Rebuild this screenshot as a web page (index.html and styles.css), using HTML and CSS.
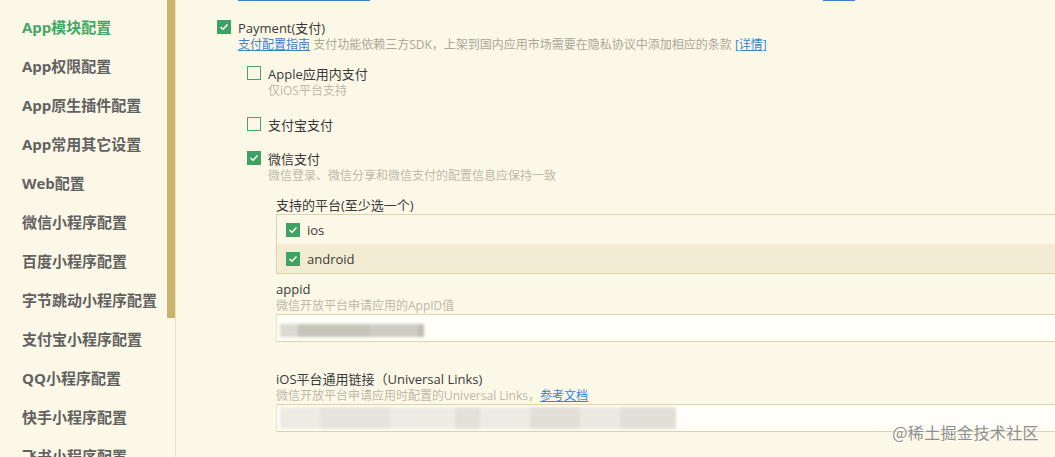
FILE: index.html
```html
<!DOCTYPE html>
<html>
<head>
  <title>manifest.json - App模块配置</title>
  <link rel="stylesheet" href="styles.css">
</head>
<body>
  <div class="page">
    <aside class="sidebar">
      <ul class="nav">
        <li class="active">App模块配置</li>
        <li>App权限配置</li>
        <li>App原生插件配置</li>
        <li>App常用其它设置</li>
        <li>Web配置</li>
        <li>微信小程序配置</li>
        <li>百度小程序配置</li>
        <li>字节跳动小程序配置</li>
        <li>支付宝小程序配置</li>
        <li>QQ小程序配置</li>
        <li>快手小程序配置</li>
        <li>飞书小程序配置</li>
      </ul>
      <div class="scrollbar"><div class="thumb"></div></div>
    </aside>

    <main class="content">
      <div class="cut-links"><span class="cut-a"></span><span class="cut-b"></span></div>

      <div class="option">
        <span class="cb on"><svg width="10" height="8" viewBox="0 0 10 8"><polyline points="1.5,4 4,6.3 8.5,1.5" fill="none" stroke="#fff" stroke-width="1.5"/></svg></span>
        <span>Payment(支付)</span>
      </div>
      <div class="desc desc-main"><a href="#">支付配置指南</a> 支付功能依赖三方SDK，上架到国内应用市场需要在隐私协议中添加相应的条款 <a href="#">[详情]</a></div>

      <div class="sub-options">
        <div class="sub">
          <div class="option">
            <span class="cb"></span>
            <span>Apple应用内支付</span>
          </div>
          <div class="desc">仅iOS平台支持</div>
        </div>
        <div class="sub">
          <div class="option">
            <span class="cb"></span>
            <span>支付宝支付</span>
          </div>
        </div>
        <div class="sub">
          <div class="option">
            <span class="cb on"><svg width="10" height="8" viewBox="0 0 10 8"><polyline points="1.5,4 4,6.3 8.5,1.5" fill="none" stroke="#fff" stroke-width="1.5"/></svg></span>
            <span>微信支付</span>
          </div>
          <div class="desc">微信登录、微信分享和微信支付的配置信息应保持一致</div>
        </div>
      </div>

      <div class="weixin-fields">
        <div class="field-label">支持的平台(至少选一个)</div>
        <div class="check-box">
          <div class="check-row">
            <span class="cb on"><svg width="10" height="8" viewBox="0 0 10 8"><polyline points="1.5,4 4,6.3 8.5,1.5" fill="none" stroke="#fff" stroke-width="1.5"/></svg></span>
            <span>ios</span>
          </div>
          <div class="check-row hover">
            <span class="cb on"><svg width="10" height="8" viewBox="0 0 10 8"><polyline points="1.5,4 4,6.3 8.5,1.5" fill="none" stroke="#fff" stroke-width="1.5"/></svg></span>
            <span>android</span>
          </div>
        </div>

        <div class="field field-appid">
          <div class="field-label">appid</div>
          <div class="field-desc">微信开放平台申请应用的AppID值</div>
          <div class="input"><div class="blur blur-a"></div></div>
        </div>

        <div class="field field-links">
          <div class="field-label">iOS平台通用链接（Universal Links)</div>
          <div class="field-desc">微信开放平台申请应用时配置的Universal Links，<a href="#">参考文档</a></div>
          <div class="input"><div class="blur blur-b"></div></div>
        </div>
      </div>
    </main>

    <div class="watermark">@稀土掘金技术社区</div>
  </div>
</body>
</html>
```

FILE: styles.css
```css
body {
  margin: 0;
  font-family: "Open Sans", "Noto Sans CJK SC", sans-serif;
  background: #fcf8e7;
}
.page {
  position: relative;
  display: flex;
  height: 457px;
  overflow: hidden;
}
.sidebar {
  display: flex;
  width: 176px;
  flex-shrink: 0;
  box-sizing: border-box;
  border-right: 1px solid #ebe4ca;
}
.nav {
  list-style: none;
  margin: 0;
  padding: 8px 0 0 22px;
  flex: 1;
  overflow: hidden;
}
.nav li {
  line-height: 39px;
  font-size: 15px;
  font-weight: bold;
  color: #626262;
  white-space: nowrap;
}
.nav li.active {
  color: #43a866;
}
.scrollbar {
  width: 8px;
}
.thumb {
  height: 318px;
  background: #c9b46c;
}
.content {
  flex: 1;
  padding-left: 41px;
  overflow: hidden;
  color: #3a3a3a;
}
.cut-links {
  display: flex;
  height: 1px;
}
.cut-a, .cut-b {
  height: 1px;
  background: #3c80cc;
}
.cut-a {
  margin-left: 21px;
  width: 132px;
}
.cut-b {
  margin-left: 453px;
  width: 32px;
}
.option {
  display: flex;
  align-items: center;
  gap: 7px;
  height: 18px;
  font-size: 13px;
}
.content > .option {
  margin-top: 17px;
}
.cb {
  display: flex;
  align-items: center;
  justify-content: center;
  width: 14px;
  height: 14px;
  box-sizing: border-box;
  border: 1px solid #49a366;
  flex-shrink: 0;
}
.cb.on {
  background: #40a262;
  border-color: #40a262;
}
.desc {
  margin-top: 1px;
  padding-left: 21px;
  font-size: 12px;
  line-height: 16px;
  color: #bdb9a8;
  white-space: nowrap;
}
.desc-main {
  color: #aaa797;
}
a {
  color: #3a82cf;
}
.sub-options {
  display: flex;
  flex-direction: column;
  gap: 16px;
  margin: 11px 0 0 30px;
}
.weixin-fields {
  margin: 12px -10px 0 59px;
}
.field-label {
  font-size: 13px;
  line-height: 18px;
  color: #3a3a3a;
  white-space: nowrap;
}
.check-box {
  border: 1px solid #dad4a9;
}
.check-row {
  display: flex;
  align-items: center;
  gap: 7px;
  height: 29px;
  padding-left: 9px;
  font-size: 13px;
}
.check-row.hover {
  background: #f3ecd2;
}
.field {
  margin-top: 7px;
}
.field .field-label {
  line-height: 17px;
}
.field-links {
  margin-top: 29px;
}
.field-desc {
  font-size: 12px;
  line-height: 16px;
  color: #bdb9a8;
  white-space: nowrap;
}
.input {
  height: 28px;
  box-sizing: border-box;
  border-top: 1px solid #dad4a9;
  border-bottom: 1px solid #dad4a9;
  border-left: 1px solid #ebe5c8;
  background: #fffef8;
  overflow: hidden;
}
.blur {
  filter: blur(1.5px);
}
.blur-a {
  width: 144px;
  height: 13px;
  margin: 9px 0 0 3px;
  background: linear-gradient(90deg, #dcd9d1 0 18px, #c6c3bb 18px 90px, #cfccc4 90px 138px, #bfbcb4 138px);
}
.blur-b {
  width: 396px;
  height: 22px;
  margin: 2px 0 0 3px;
  background: linear-gradient(90deg, #eeebe3 0 40px, #e6e3db 40px 110px, #efece4 110px 175px, #e3e0d8 175px 200px, #eeebe3 200px 250px, #e2dfd7 250px 300px, #ebe8e0 300px 340px, #e2dfd7 340px);
}
.watermark {
  position: absolute;
  right: 16px;
  bottom: 15px;
  font-family: "Noto Sans CJK SC", sans-serif;
  font-size: 16px;
  line-height: 20px;
  letter-spacing: 0.4px;
  color: #8e8e8e;
  text-shadow: 0 0 2px #fff;
}
```
